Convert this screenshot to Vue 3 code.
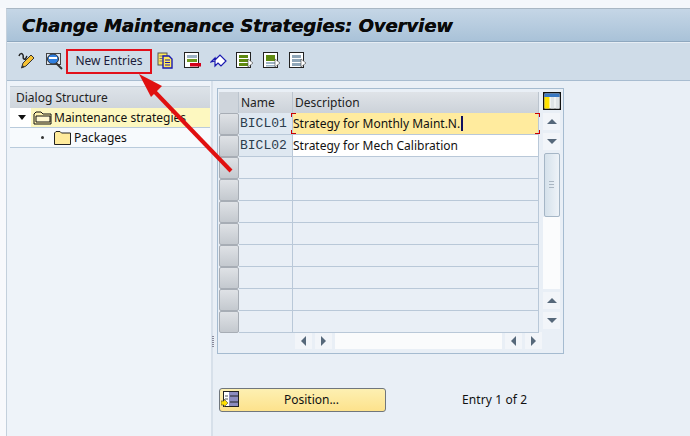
<script setup>
const rows = [
  { name: 'BICL01', desc: 'Strategy for Monthly Maint.N.', active: true },
  { name: 'BICL02', desc: 'Strategy for Mech Calibration', filled: true },
  {}, {}, {}, {}, {}, {}, {}, {}
]
</script>

<template>
  <div class="page">
    <div class="top-strip"></div>
    <div class="shell">
      <header class="title"><h1>Change Maintenance Strategies: Overview</h1></header>
      <div class="toolbar">
        <svg class="ic first" width="18" height="18" viewBox="0 0 18 18"><path d="M1 4c1-3 3-3 4-1s-1 3 1 4 2-2 3-3" fill="none" stroke="#222" stroke-width="1.500"/><path d="M3.500 16l1.500-5 8-8 3 3-8 8z" fill="#f6c234" stroke="#333"/><path d="M3.500 16l1-3 2 2z" fill="#333"/></svg>
        <svg class="ic" width="18" height="18" viewBox="0 0 18 18"><rect x="1.500" y="1.500" width="14" height="11" fill="#dfe8f4" stroke="#444"/><ellipse cx="8" cy="7" rx="5.500" ry="5" fill="#2f7fe0" stroke="#333"/><path d="M4 6h8" stroke="#fff" stroke-width="2"/><path d="M11 11l6 6" stroke="#333" stroke-width="2"/></svg>
        <span class="new">New Entries</span>
        <svg class="ic gap1" width="17" height="17" viewBox="0 0 17 17"><rect x="1" y="1" width="9" height="12" fill="#ffe95c" stroke="#555"/><path d="M2.500 4h6M2.500 6.500h3M2.500 9h3" stroke="#777"/><path d="M6 4h6l3 3v9H6z" fill="#ffe95c" stroke="#1a1ab0" stroke-width="1.400"/><path d="M8 8h5M8 10.500h5M8 13h5" stroke="#1a1ab0"/></svg>
        <svg class="ic gap2" width="17" height="17" viewBox="0 0 17 17"><rect x=".5" y=".5" width="14" height="15" fill="#fff" stroke="#222"/><rect x="3" y="3" width="10" height="3" fill="#9db3c4"/><rect x="3" y="7" width="10" height="3" fill="#6f9a20"/><rect x="6" y="11" width="11" height="3.500" fill="#d4001a"/></svg>
        <svg class="ic gap3" width="17" height="17" viewBox="0 0 17 17"><path d="M1 10l4-4v2l5-5 6 6-5 5-3-3-3 3V9z" fill="#fff" stroke="#1a1ab0" stroke-width="1.200"/></svg>
        <svg class="ic gap4" width="18" height="17" viewBox="0 0 18 17"><rect x=".5" y=".5" width="14" height="15" fill="#fff" stroke="#222"/><rect x="3" y="3" width="9" height="3" fill="#5f8a10"/><rect x="3" y="7" width="9" height="3" fill="#5f8a10"/><rect x="3" y="11" width="9" height="3" fill="#5f8a10"/><path d="M12 7l5 4-5 4z" fill="#fff" stroke="#444" stroke-width=".6"/></svg>
        <svg class="ic gap5" width="18" height="17" viewBox="0 0 18 17"><rect x=".5" y=".5" width="14" height="15" fill="#fff" stroke="#222"/><rect x="3" y="3" width="9" height="6" fill="#5f8a10"/><rect x="3" y="10" width="9" height="2" fill="#9db3c4"/><rect x="3" y="13" width="9" height="1.500" fill="#9db3c4"/><path d="M12 7l5 4-5 4z" fill="#fff" stroke="#444" stroke-width=".6"/></svg>
        <svg class="ic gap6" width="18" height="17" viewBox="0 0 18 17"><rect x=".5" y=".5" width="14" height="15" fill="#fff" stroke="#222"/><rect x="3" y="3" width="9" height="3" fill="#8fa6b8"/><rect x="3" y="7" width="9" height="3" fill="#8fa6b8"/><rect x="3" y="11" width="9" height="3" fill="#8fa6b8"/><path d="M12 7l5 4-5 4z" fill="#fff" stroke="#444" stroke-width=".6"/></svg>
      </div>
      <div class="body">
        <aside class="side">
          <div class="side-head">Dialog Structure</div>
          <div class="tree-row sel">
            <span class="caret"></span>
            <svg class="folder" width="19" height="14" viewBox="0 0 19 14"><path d="M1 13V3l2-2h5l2 2h8v10z" fill="#fff3b0" stroke="#111"/><path d="M3 5h14v6H3z" fill="#fff8d0" stroke="#111"/></svg>
            <span class="label">Maintenance strategies</span>
          </div>
          <div class="tree-row child">
            <span class="dot"></span>
            <svg class="folder" width="17" height="14" viewBox="0 0 17 14"><path d="M.5 13.500V2l1.500-1.500h4L7.500 2h9v11.500z" fill="#ffeb9c" stroke="#222"/></svg>
            <span class="label lab2">Packages</span>
          </div>
          <div class="sash">
            <i v-for="n in 6" :key="n"></i>
          </div>
        </aside>
        <main class="main">
          <section class="tc">
            <div class="grid-wrap">
              <div class="grid">
                <div class="head">
                  <span class="sel-h"></span>
                  <span class="hc name">Name</span>
                  <span class="hc desc">Description</span>
                </div>
                <div v-for="(r, i) in rows" :key="i" class="row">
                  <span class="sel-c"></span>
                  <span class="cell name mono">{{ r.name }}</span>
                  <span class="cell desc" :class="{ active: r.active, filled: r.filled }">
                    {{ r.desc }}<b v-if="r.active" class="cursor"></b>
                    <template v-if="r.active">
                      <i class="mk tl"></i><i class="mk bl"></i><i class="mk tr"></i><i class="mk br"></i>
                    </template>
                  </span>
                </div>
              </div>
              <div class="vbar">
                <svg class="cfg" width="18" height="18" viewBox="0 0 18 18"><rect x=".75" y=".75" width="16.500" height="16.500" fill="#fff" stroke="#111" stroke-width="1.500"/><rect x="1.500" y="1.500" width="15" height="3.500" fill="#3a78c2"/><rect x="1.500" y="5" width="5" height="11.500" fill="#ffe100"/><rect x="7.500" y="5" width="4" height="11.500" fill="#dfe3e6"/><rect x="12.500" y="5" width="4" height="11.500" fill="#dfe3e6"/></svg>
                <span class="sb"><i class="up"></i></span>
                <span class="sb"><i class="down"></i></span>
                <span class="thumb"><em></em></span>
                <span class="track"></span>
                <span class="sb"><i class="up"></i></span>
                <span class="sb"><i class="down"></i></span>
              </div>
            </div>
            <div class="hbar">
              <span class="sb h"><i class="left"></i></span>
              <span class="sb h"><i class="right"></i></span>
              <span class="htrack"></span>
              <span class="sb h"><i class="left"></i></span>
              <span class="sb h"><i class="right"></i></span>
            </div>
          </section>
          <div class="actions">
            <button class="pos">
              <svg class="pos-ic" width="18" height="17" viewBox="0 0 18 17"><rect x="2.500" y=".5" width="15" height="15" fill="#8c8cc0" stroke="#222"/><rect x="3" y="1" width="5" height="14" fill="#fff"/><path d="M9 5h8M9 11h8" stroke="#222"/><path d="M4 5h3M4 8h3" stroke="#555"/><path d="M0 10h3V8l4 4-4 4v-2H0z" fill="#ffe100" stroke="#444" stroke-width=".6"/></svg>
              <span>Position...</span>
            </button>
            <span class="entry">Entry 1 of 2</span>
          </div>
        </main>
      </div>
    </div>
    <svg class="arrow" width="690" height="436" viewBox="0 0 690 436">
      <path d="M231 171L154 91" stroke="#e01010" stroke-width="4" fill="none"/>
      <path d="M139 74L162 86 151 97z" fill="#e01010"/>
    </svg>
  </div>
</template>

<style>
html, body { margin: 0; padding: 0; }
</style>

<style scoped>
.page { position: relative; width: 690px; height: 436px; overflow: hidden; background: #f8f9fc; font: 12px/16px "Noto Sans", "Open Sans", sans-serif; color: #111; }
.top-strip { height: 8px; background: #f4f7fb; }
.shell { margin-left: 6px; height: 428px; border-top: 1px solid #a9b7c4; border-left: 1px solid #c4d0dc; display: flex; flex-direction: column; background: #e9eff6; }
.title { height: 33px; box-sizing: border-box; flex: none; background: linear-gradient(#c5d6e6, #a9c2d8); border-bottom: 1px solid #8fa8bf; padding-left: 15px; }
h1 { margin: 0; font: italic bold 18px/33px "DejaVu Sans", Verdana, sans-serif; color: #0a0a0a; letter-spacing: -.05px; white-space: nowrap; text-shadow: .3px 0 0 #0a0a0a; }
.toolbar { height: 39px; flex: none; box-sizing: border-box; display: flex; align-items: center; background: #cfdce8; border-top: 1px solid #e6edf4; border-bottom: 1px solid #a8bcd0; padding-left: 11px; }
.ic { flex: none; margin-top: -2px; }
.first { margin-right: 9px; }
.new { box-sizing: border-box; width: 86px; height: 25px; border: 2px solid #e2101a; display: flex; align-items: center; justify-content: center; color: #1c1c3a; margin-left: 3px; margin-top: -1px; }
.gap1 { margin-left: 5px; }
.gap2 { margin-left: 10px; }
.gap3 { margin-left: 9px; }
.gap4 { margin-left: 9px; }
.gap5 { margin-left: 9px; }
.gap6 { margin-left: 8px; }
.body { flex: 1; display: flex; min-height: 0; }
.side { position: relative; box-sizing: border-box; width: 206px; flex: none; padding: 5px 3px 0 3px; border-right: 2px solid #d7e0ea; background: #eef3f9; }
.side-head { height: 21px; line-height: 21px; padding-left: 6px; background: linear-gradient(#dde3e9, #cfd5dc); border-top: 1px solid #c2ccd6; color: #222; box-sizing: content-box; width: 194px; }
.tree-row { height: 20px; box-sizing: border-box; display: flex; align-items: center; border-bottom: 1px solid #b9cbdc; background: #fff; width: 200px; position: relative; }
.tree-row.sel { background: linear-gradient(90deg, #fff 21px, #fdf8c0 21px); }
.tree-row.child { background: #f7fafd; }
.caret { position: absolute; left: 8px; top: 7px; border: 4px solid transparent; border-top: 5px solid #111; border-bottom: 0; }
.dot { position: absolute; left: 31px; top: 8px; width: 3px; height: 3px; background: #333; border-radius: 50%; }
.sel .folder { margin-left: 23px; }
.child .folder { margin-left: 44px; }
.label { margin-left: 2px; white-space: nowrap; }
.lab2 { margin-left: 3px; }
.sash { position: absolute; right: -3px; top: 255px; display: grid; gap: 1px; }
.sash i { display: block; width: 2px; height: 1px; background: #889; }
.main { flex: 1; min-width: 0; padding: 7px 0 0 4px; }
.tc { box-sizing: border-box; width: 347px; height: 266px; border: 1px solid #a5bbd0; padding: 3px 1px 0 1px; background: #e9eff6; }
.grid-wrap { display: flex; }
.grid { width: 320px; flex: none; }
.head { display: flex; height: 21px; }
.sel-h { width: 20px; flex: none; margin-left: 0; background: #cfd5dc; border-right: 1px solid #bbc4ce; box-sizing: border-box; }
.hc { background: linear-gradient(#dfe3e8, #ccd2d9); line-height: 21px; padding-left: 2px; box-sizing: border-box; color: #222; border-right: 1px solid #bbc4ce; }
.name { width: 54px; flex: none; }
.desc { flex: 1; }
.row { display: flex; height: 22px; }
.sel-c { box-sizing: border-box; width: 20px; flex: none; background: linear-gradient(#dfe2e6, #c4c9cf); border: 1px solid #a7adb5; border-radius: 2px; }
.cell { box-sizing: border-box; line-height: 21px; padding-left: 0; border-bottom: 1px solid #b9c8d8; border-right: 1px solid #b9c8d8; position: relative; white-space: nowrap; }
.mono { font: 13px/21px "Liberation Mono", "DejaVu Sans Mono", monospace; color: #2c3c4c; padding-left: 1px; background: #e9eff6; }
.row:nth-child(-n+3) .mono { background: #dfe8f1; }
.active { background: #ffeb9e; }
.filled { background: #fff; }
.cursor { display: inline-block; width: 2px; height: 15px; background: #101060; vertical-align: -3px; margin-left: 1px; }
.mk { position: absolute; width: 4px; height: 3px; }
.tl { left: -2px; top: 0; border-left: 1px solid #c00; border-top: 1px solid #c00; }
.bl { left: -2px; bottom: 0; border-left: 1px solid #c00; border-bottom: 1px solid #c00; }
.tr { right: -2px; top: 0; border-right: 1px solid #c00; border-top: 1px solid #c00; }
.br { right: -2px; bottom: 0; border-right: 1px solid #c00; border-bottom: 1px solid #c00; }
.vbar { width: 24px; flex: none; display: flex; flex-direction: column; align-items: center; padding-left: 1px; box-sizing: border-box; }
.cfg { display: block; margin-bottom: 0; flex: none; margin-left: 1px; }
.sb { width: 17px; height: 17px; margin-top: 3px; background: #f2f5f9; display: flex; align-items: center; justify-content: center; flex: none; }
.sb i { display: block; width: 0; height: 0; border: 5px solid transparent; }
.up { border-bottom: 5px solid #56687a !important; border-top: 0 !important; }
.down { border-top: 5px solid #56687a !important; border-bottom: 0 !important; }
.left { border-right: 5px solid #56687a !important; border-left: 0 !important; }
.right { border-left: 5px solid #56687a !important; border-right: 0 !important; }
.thumb { box-sizing: border-box; width: 16px; height: 64px; margin-top: 3px; border: 1px solid #a5b6c6; border-radius: 2px; background: linear-gradient(90deg, #d5e1eb, #eef3f8); display: flex; align-items: center; justify-content: center; flex: none; }
.thumb em { width: 5px; height: 8px; background: repeating-linear-gradient(#aab6c2 0 1px, transparent 1px 3px); }
.track { width: 17px; height: 72px; background: #fbfcfd; margin-top: 0; flex: none; }
.hbar { display: flex; align-items: center; gap: 3px; margin: -1px 0 0 76px; }
.sb.h { margin: 0; }
.htrack { width: 167px; height: 17px; background: #fafbfc; }
.actions { display: flex; align-items: center; margin-top: 34px; margin-left: 2px; }
.pos { position: relative; box-sizing: border-box; width: 167px; height: 24px; padding: 0 0 0 18px; border: 1px solid #70767c; border-radius: 3px; background: linear-gradient(#fdf0b2, #fde28c); font: 12px/16px "Noto Sans", "Open Sans", sans-serif; color: #111; text-align: center; }
.pos-ic { position: absolute; left: 1px; top: 2px; }
.entry { margin-left: 76px; color: #111; letter-spacing: .1px; }
.arrow { position: absolute; left: 0; top: 0; pointer-events: none; }
</style>
